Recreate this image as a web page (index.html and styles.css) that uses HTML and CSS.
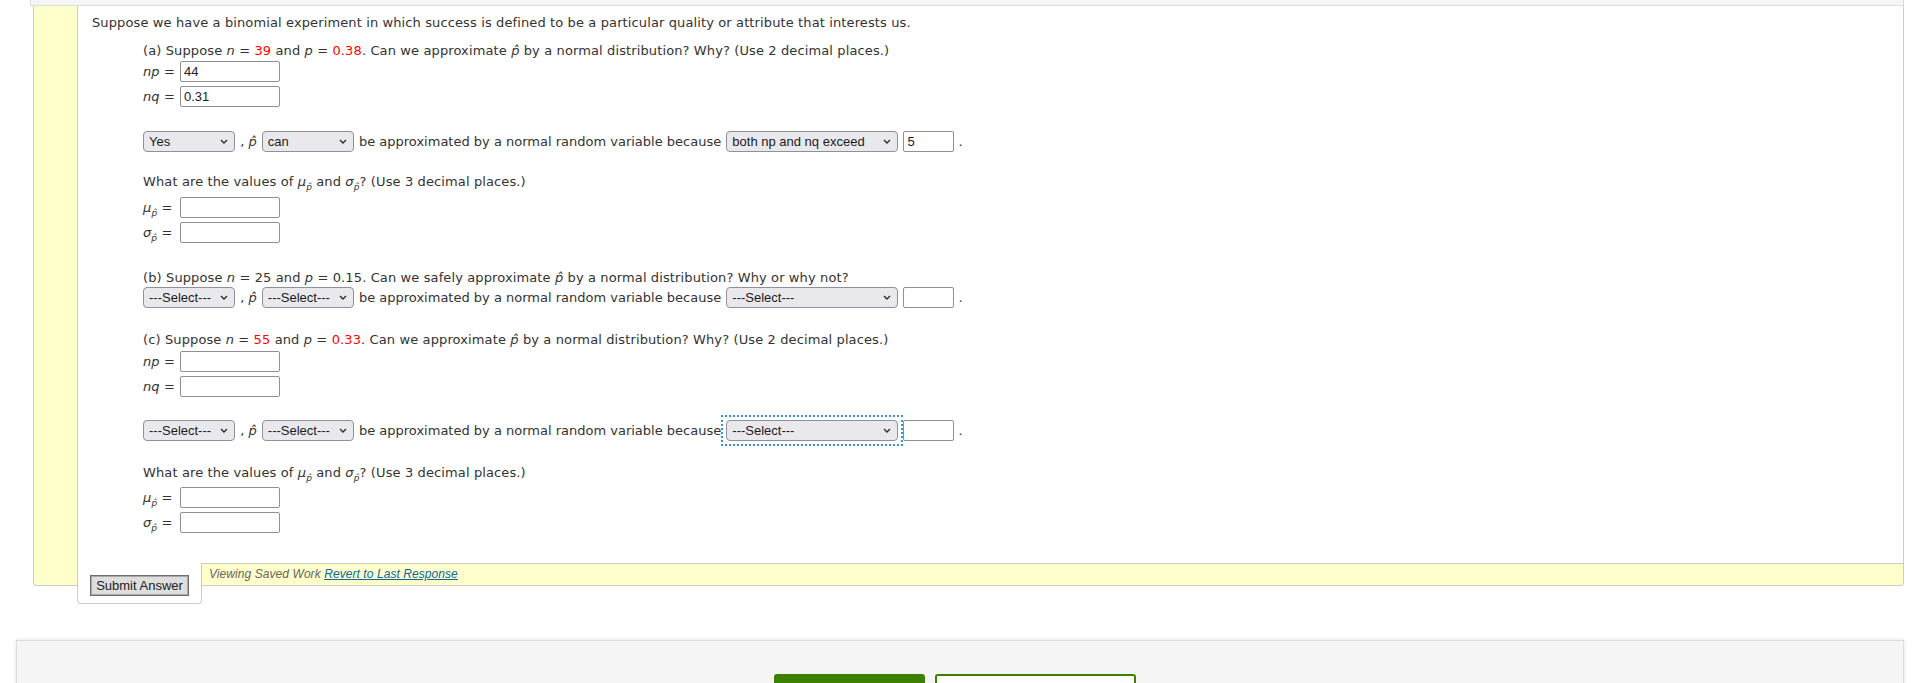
FILE: index.html
```html
<!DOCTYPE html>
<html lang="en">
<head>
<meta charset="utf-8">
<title>Binomial experiment question</title>
<link rel="stylesheet" href="styles.css">
</head>
<body>
<div class="prev-strip"></div>
<div class="question">
  <div class="side"></div>
  <div class="content">
    <p class="intro">Suppose we have a binomial experiment in which success is defined to be a particular quality or attribute that interests us.</p>
    <div class="part">
      <p class="qline qa">(a) Suppose <i>n</i> = <span class="red">39</span> and <i>p</i> = <span class="red">0.38</span>. Can we approximate <i>p&#770;</i> by a normal distribution? Why? (Use 2 decimal places.)</p>
      <div class="eq eq-first"><span class="lbl"><i>np</i> =</span><input class="num" type="text" value="44"></div>
      <div class="eq"><span class="lbl"><i>nq</i> =</span><input class="num" type="text" value="0.31"></div>
      <div class="selrow sr-a"><span class="sel"><select class="w92"><option>Yes</option></select><svg class="chev" viewBox="0 0 8 5"><path d="M1 1l3 3 3-3"/></svg></span> , <i>p&#770;</i> <span class="sel"><select class="w92"><option>can</option></select><svg class="chev" viewBox="0 0 8 5"><path d="M1 1l3 3 3-3"/></svg></span> be approximated by a normal random variable because <span class="sel"><select class="w172"><option>both np and nq exceed</option></select><svg class="chev" viewBox="0 0 8 5"><path d="M1 1l3 3 3-3"/></svg></span> <input class="small" type="text" value="5"> .</div>
      <p class="qline qw1">What are the values of <i>&#956;</i><sub><i>p&#770;</i></sub> and <i>&#963;</i><sub><i>p&#770;</i></sub>? (Use 3 decimal places.)</p>
      <div class="eq eq-mu"><span class="lbl"><i>&#956;</i><sub><i>p&#770;</i></sub> =</span><input class="num" type="text"></div>
      <div class="eq"><span class="lbl"><i>&#963;</i><sub><i>p&#770;</i></sub> =</span><input class="num" type="text"></div>

      <p class="qline qb">(b) Suppose <i>n</i> = 25 and <i>p</i> = 0.15. Can we safely approximate <i>p&#770;</i> by a normal distribution? Why or why not?</p>
      <div class="selrow sr-b"><span class="sel"><select class="w92"><option>---Select---</option></select><svg class="chev" viewBox="0 0 8 5"><path d="M1 1l3 3 3-3"/></svg></span> , <i>p&#770;</i> <span class="sel"><select class="w92"><option>---Select---</option></select><svg class="chev" viewBox="0 0 8 5"><path d="M1 1l3 3 3-3"/></svg></span> be approximated by a normal random variable because <span class="sel"><select class="w172"><option>---Select---</option></select><svg class="chev" viewBox="0 0 8 5"><path d="M1 1l3 3 3-3"/></svg></span> <input class="small" type="text"> .</div>

      <p class="qline qc">(c) Suppose <i>n</i> = <span class="red">55</span> and <i>p</i> = <span class="red">0.33</span>. Can we approximate <i>p&#770;</i> by a normal distribution? Why? (Use 2 decimal places.)</p>
      <div class="eq eq-first-c"><span class="lbl"><i>np</i> =</span><input class="num" type="text"></div>
      <div class="eq"><span class="lbl"><i>nq</i> =</span><input class="num" type="text"></div>
      <div class="selrow sr-c"><span class="sel"><select class="w92"><option>---Select---</option></select><svg class="chev" viewBox="0 0 8 5"><path d="M1 1l3 3 3-3"/></svg></span> , <i>p&#770;</i> <span class="sel"><select class="w92"><option>---Select---</option></select><svg class="chev" viewBox="0 0 8 5"><path d="M1 1l3 3 3-3"/></svg></span> be approximated by a normal random variable because <span class="sel focus"><select class="w172"><option>---Select---</option></select><svg class="chev" viewBox="0 0 8 5"><path d="M1 1l3 3 3-3"/></svg></span> <input class="small" type="text"> .</div>
      <p class="qline qw2">What are the values of <i>&#956;</i><sub><i>p&#770;</i></sub> and <i>&#963;</i><sub><i>p&#770;</i></sub>? (Use 3 decimal places.)</p>
      <div class="eq eq-mu2"><span class="lbl"><i>&#956;</i><sub><i>p&#770;</i></sub> =</span><input class="num" type="text"></div>
      <div class="eq"><span class="lbl"><i>&#963;</i><sub><i>p&#770;</i></sub> =</span><input class="num" type="text"></div>
    </div>
  </div>
  <div class="submit-cell"><button class="submit" type="button">Submit Answer</button></div>
  <div class="saved-bar"><em>Viewing Saved Work</em> <a href="#">Revert to Last Response</a></div>
</div>
<div class="bottom-bar">
  <button class="btn-primary" type="button" aria-label="Submit Assignment"></button>
  <button class="btn-outline" type="button" aria-label="Save Assignment Progress"></button>
</div>
</body>
</html>
```

FILE: styles.css
```css
html, body {
  margin: 0;
  padding: 0;
  background: #fff;
  overflow: hidden;
}
body {
  width: 1920px;
  height: 683px;
  font-family: "DejaVu Sans", Verdana, sans-serif;
  font-size: 13px;
  letter-spacing: 0.12px;
  color: #333;
}
p { margin: 0; }

.prev-strip {
  margin: 0 16px 0 30px;
  height: 5px;
  background: #f5f5f5;
  border: 1px solid #ddd;
  border-top: 0;
}

.question {
  margin: 0 16px 0 33px;
  display: grid;
  grid-template-columns: 44px 125px 1fr;
  grid-template-rows: auto 23px 18px;
}
.side {
  grid-column: 1;
  grid-row: 1 / 3;
  background: #ffffcc;
  border-left: 1px solid #ccc;
  border-bottom: 1px solid #ccc;
  border-bottom-left-radius: 4px;
}
.content {
  grid-column: 2 / 4;
  grid-row: 1;
  border-left: 1px solid #ccc;
  border-right: 1px solid #ccc;
  padding: 9px 0 30px 14px;
}
.submit-cell {
  grid-column: 2;
  grid-row: 2 / 4;
  border-left: 1px solid #ccc;
  border-right: 1px solid #ccc;
  border-bottom: 1px solid #ccc;
  border-radius: 0 0 4px 4px;
  padding: 12px 0 0 12px;
}
.saved-bar {
  grid-column: 3;
  grid-row: 2;
  box-sizing: border-box;
  background: #ffffcc;
  border-top: 1px solid #ccc;
  border-bottom: 1px solid #ccc;
  border-right: 1px solid #ccc;
  border-bottom-right-radius: 4px;
  padding-left: 7px;
  font-family: "Liberation Sans", Arial, sans-serif;
  font-size: 12px;
  letter-spacing: 0.07px;
  line-height: 21px;
  color: #666;
}
.saved-bar em { font-style: italic; }
.saved-bar a { color: #0b66a3; font-style: italic; text-decoration: underline; }

.submit {
  display: block;
  box-sizing: border-box;
  width: 99px;
  height: 21px;
  padding: 0;
  font-family: "Liberation Sans", Arial, sans-serif;
  font-size: 13px;
  letter-spacing: 0;
  color: #222;
  background: #dedede;
  border: 1px solid #6f6f6f;
  box-shadow: inset 0 0 0 1px #a8a8a8;
  border-radius: 0;
}

/* text */
.intro { line-height: 16px; margin-bottom: 12px; }
.part { margin-left: 51px; }
.qline { line-height: 16px; }
.red { color: #ff0000; }
i { font-style: italic; }
sub {
  font-size: 9px;
  line-height: 0;
  vertical-align: -4px;
}

.eq {
  height: 21px;
  line-height: 21px;
  margin-top: 4px;
  white-space: nowrap;
}
.eq-first { margin-top: 2px; }
.eq-first-c { margin-top: 3px; }
.eq-mu { margin-top: 7px; }
.eq-mu2 { margin-top: 6px; }
.lbl {
  display: inline-block;
  width: 37px;
  vertical-align: top;
}

input {
  box-sizing: border-box;
  height: 21px;
  vertical-align: top;
  margin: 0;
  padding: 0 3px;
  border: 1px solid #8f8f9d;
  border-radius: 2px;
  background: #fff;
  font-family: "Liberation Sans", Arial, sans-serif;
  font-size: 13px;
  letter-spacing: 0;
  color: #222;
}
.num { width: 100px; }
.small { width: 51px; }

.selrow {
  height: 21px;
  line-height: 21px;
  white-space: nowrap;
  letter-spacing: 0;
}
.sr-a { margin-top: 24px; }
.sr-b { margin-top: 1px; }
.sr-c { margin-top: 23px; }

.qw1 { margin-top: 22px; }
.qb { margin-top: 27px; }
.qc { margin-top: 24px; }
.qw2 { margin-top: 24px; }

.sel {
  position: relative;
  display: inline-block;
  vertical-align: top;
  height: 21px;
  margin: 0 1px;
}
.selrow > .sel:first-child { margin-left: 0; }
.sel select {
  -webkit-appearance: none;
  appearance: none;
  box-sizing: border-box;
  height: 21px;
  margin: 0;
  padding: 0 18px 0 5px;
  border: 1px solid #8f8f9d;
  border-radius: 4px;
  background: #e9e9ed;
  font-family: "Liberation Sans", Arial, sans-serif;
  font-size: 13px;
  letter-spacing: 0;
  color: #1b1b1b;
  vertical-align: top;
}
.w92 { width: 92px; }
.w172 { width: 172px; }
.chev {
  position: absolute;
  right: 7px;
  top: 8px;
  width: 8px;
  height: 5px;
  pointer-events: none;
}
.chev path {
  fill: none;
  stroke: #2b2b2b;
  stroke-width: 1.4;
}
.focus {
  outline: 2px dotted #3592e3;
  outline-offset: 3px;
}

.bottom-bar {
  margin: 36px 16px 0 16px;
  height: 60px;
  box-sizing: border-box;
  background: #f5f5f5;
  border: 1px solid #ddd;
  box-shadow: 0 0 4px rgba(0, 0, 0, 0.12);
  display: flex;
  justify-content: center;
  gap: 10px;
  padding: 33px 10px 0 0;
}
.bottom-bar button {
  box-sizing: border-box;
  height: 38px;
  border-radius: 3px;
}
.btn-primary {
  width: 151px;
  background: #3d8000;
  border: 2px solid #3d8000;
}
.btn-outline {
  width: 201px;
  background: #fff;
  border: 2px solid #3d8000;
}
```
